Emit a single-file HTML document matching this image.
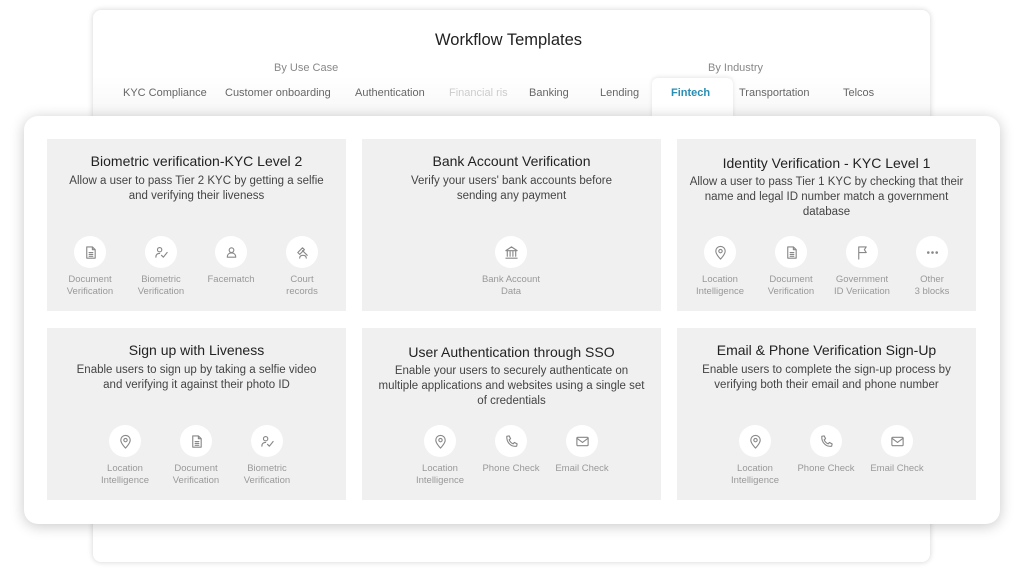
<!DOCTYPE html><html><head><style>
*{margin:0;padding:0;box-sizing:border-box}
body{width:1024px;height:572px;background:#fff;position:relative;overflow:hidden;font-family:"Liberation Sans",sans-serif;color:#222}
.back{position:absolute;left:93px;top:10px;width:837px;height:552px;background:#fff;border-radius:8px;box-shadow:0 0 6px rgba(0,0,0,.18)}
.t{position:absolute;font-size:11px;color:#666;white-space:nowrap}
.front{position:absolute;left:24px;top:116px;width:976px;height:408px;background:#fff;border-radius:14px;box-shadow:0 2px 14px rgba(0,0,0,.22)}
.card{position:absolute;width:299px;height:172px;background:#f0f0f0;text-align:center}
.card h3{font-weight:normal;font-size:14px;color:#222;margin-top:14px;line-height:17px}
.card p{font-size:11.5px;color:#444;line-height:15px;margin-top:4px;padding:0 6px}
.ic{position:absolute;width:70px;text-align:center;font-size:9.5px;color:#999;line-height:11.5px}
.ic .c{width:32px;height:32px;border-radius:50%;background:#fff;margin:0 auto 6px;display:flex;align-items:center;justify-content:center}
.ic svg{width:15px;height:15px;fill:none;stroke:#888;stroke-width:1.2;stroke-linecap:round;stroke-linejoin:round}
</style></head><body>
<div class="back">
<div class="t" style="left:342px;top:21px;font-size:16.5px;color:#222">Workflow Templates</div>
<div class="t" style="left:181px;top:52px;color:#888">By Use Case</div>
<div class="t" style="left:615px;top:52px;color:#888">By Industry</div>
<div style="position:absolute;left:0;top:66px;width:837px;height:40px;background:linear-gradient(#fff,#f7f7f7)"></div>
<div class="t" style="left:30px;top:77px">KYC Compliance</div>
<div class="t" style="left:132px;top:77px">Customer onboarding</div>
<div class="t" style="left:262px;top:77px">Authentication</div>
<div class="t" style="left:356px;top:77px;color:#ccc">Financial ris</div>
<div class="t" style="left:436px;top:77px">Banking</div>
<div class="t" style="left:507px;top:77px">Lending</div>
<div style="position:absolute;left:559px;top:68px;width:81px;height:40px;background:#fff;border-radius:6px 6px 0 0;box-shadow:0 -1px 4px rgba(0,0,0,.1)"></div>
<div class="t" style="left:578px;top:77px;color:#2a8db3;font-weight:bold">Fintech</div>
<div class="t" style="left:646px;top:77px">Transportation</div>
<div class="t" style="left:750px;top:77px">Telcos</div>
</div>
<div class="front"></div>
<svg width="0" height="0" style="position:absolute"><defs>
<symbol id="doc" viewBox="0 0 16 16"><path d="M4 2h6l3 3v9H4z M10 2v3h3 M6.5 8h4 M6.5 10h4 M6.5 12h4" fill="none"/></symbol>
<symbol id="bio" viewBox="0 0 16 16"><circle cx="6" cy="5" r="2.3"/><path d="M2 13c0-3 2-4 4-4 M8 11l2 2 4-5"/></symbol>
<symbol id="face" viewBox="0 0 16 16"><circle cx="8" cy="5.5" r="2.5"/><path d="M3.5 13c0-3 2-4.5 4.5-4.5s4.5 1.5 4.5 4.5z"/></symbol>
<symbol id="court" viewBox="0 0 16 16"><path d="M3 8l5-5 2 2-5 5z M8 6l5 5 M5 14c0-2 1.5-3 3.5-3s3.5 1 3.5 3"/></symbol>
<symbol id="bank" viewBox="0 0 16 16"><path d="M2 6l6-4 6 4z M3.5 7v5 M6.5 7v5 M9.5 7v5 M12.5 7v5 M2 14h12"/></symbol>
<symbol id="loc" viewBox="0 0 16 16"><path d="M8 15s5-5 5-8.5A5 5 0 0 0 3 6.5C3 10 8 15 8 15z"/><circle cx="8" cy="6.5" r="1.8"/></symbol>
<symbol id="flag" viewBox="0 0 16 16"><path d="M4 15V2h8l-2 3 2 3H4"/></symbol>
<symbol id="dots" viewBox="0 0 16 16"><circle cx="3.5" cy="8" r=".8" fill="#888"/><circle cx="8" cy="8" r=".8" fill="#888"/><circle cx="12.5" cy="8" r=".8" fill="#888"/></symbol>
<symbol id="phone" viewBox="0 0 16 16"><path d="M3 2.5l2.5-.5 1.5 3-1.5 1.2a8 8 0 0 0 4.3 4.3L11 9l3 1.5-.5 2.5c-6 1-11-4-10.5-10.5z"/></symbol>
<symbol id="mail" viewBox="0 0 16 16"><rect x="2" y="3.5" width="12" height="9" rx="1"/><path d="M2 4.5l6 4.5 6-4.5"/></symbol>
</defs></svg>

<div class="card" style="left:47px;top:139px"><h3>Biometric verification-KYC Level 2</h3><p>Allow a user to pass Tier 2 KYC by getting a selfie<br>and verifying their liveness</p></div>
<div class="card" style="left:362px;top:139px"><h3>Bank Account Verification</h3><p>Verify your users' bank accounts before<br>sending any payment</p></div>
<div class="card" style="left:677px;top:139px"><h3 style="margin-top:16px">Identity Verification - KYC Level 1</h3><p style="margin-top:3px">Allow a user to pass Tier 1 KYC by checking that their<br>name and legal ID number match a government<br>database</p></div>
<div class="card" style="left:47px;top:328px"><h3>Sign up with Liveness</h3><p>Enable users to sign up by taking a selfie video<br>and verifying it against their photo ID</p></div>
<div class="card" style="left:362px;top:328px"><h3 style="margin-top:16px">User Authentication through SSO</h3><p style="margin-top:3px">Enable your users to securely authenticate on<br>multiple applications and websites using a single set<br>of credentials</p></div>
<div class="card" style="left:677px;top:328px"><h3>Email &amp; Phone Verification Sign-Up</h3><p>Enable users to complete the sign-up process by<br>verifying both their email and phone number</p></div>

<div class="ic" style="left:55px;top:236px"><div class="c"><svg><use href="#doc"/></svg></div>Document<br>Verification</div>
<div class="ic" style="left:126px;top:236px"><div class="c"><svg><use href="#bio"/></svg></div>Biometric<br>Verification</div>
<div class="ic" style="left:196px;top:236px"><div class="c"><svg><use href="#face"/></svg></div>Facematch</div>
<div class="ic" style="left:267px;top:236px"><div class="c"><svg><use href="#court"/></svg></div>Court<br>records</div>
<div class="ic" style="left:471px;top:236px;width:80px"><div class="c"><svg><use href="#bank"/></svg></div>Bank Account<br>Data</div>
<div class="ic" style="left:685px;top:236px"><div class="c"><svg><use href="#loc"/></svg></div>Location<br>Intelligence</div>
<div class="ic" style="left:756px;top:236px"><div class="c"><svg><use href="#doc"/></svg></div>Document<br>Verification</div>
<div class="ic" style="left:822px;top:236px;width:80px"><div class="c"><svg><use href="#flag"/></svg></div>Government<br>ID Veriication</div>
<div class="ic" style="left:897px;top:236px"><div class="c"><svg><use href="#dots"/></svg></div>Other<br>3 blocks</div>

<div class="ic" style="left:90px;top:425px"><div class="c"><svg><use href="#loc"/></svg></div>Location<br>Intelligence</div>
<div class="ic" style="left:161px;top:425px"><div class="c"><svg><use href="#doc"/></svg></div>Document<br>Verification</div>
<div class="ic" style="left:232px;top:425px"><div class="c"><svg><use href="#bio"/></svg></div>Biometric<br>Verification</div>
<div class="ic" style="left:405px;top:425px"><div class="c"><svg><use href="#loc"/></svg></div>Location<br>Intelligence</div>
<div class="ic" style="left:476px;top:425px"><div class="c"><svg><use href="#phone"/></svg></div>Phone Check</div>
<div class="ic" style="left:547px;top:425px"><div class="c"><svg><use href="#mail"/></svg></div>Email Check</div>
<div class="ic" style="left:720px;top:425px"><div class="c"><svg><use href="#loc"/></svg></div>Location<br>Intelligence</div>
<div class="ic" style="left:791px;top:425px"><div class="c"><svg><use href="#phone"/></svg></div>Phone Check</div>
<div class="ic" style="left:862px;top:425px"><div class="c"><svg><use href="#mail"/></svg></div>Email Check</div>
</body></html>
